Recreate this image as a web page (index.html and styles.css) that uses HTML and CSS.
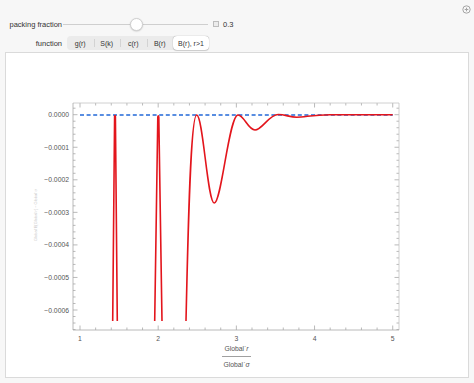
FILE: index.html
```html
<!DOCTYPE html>
<html lang="en">
<head>
    <meta charset="UTF-8">
    <meta name="viewport" content="width=device-width, initial-scale=1.0">
    <title>Bridge Function of Hard Spheres</title>
    <link rel="stylesheet" href="styles.css">
</head>
<body>
    <div class="app">
        <button class="corner-btn" title="Options">
            <svg width="9" height="9" viewBox="0 0 9 9"><circle cx="4.5" cy="4.5" r="3.7" fill="none" stroke="#a4a4a4" stroke-width="1"/><path d="M4.5 2.7v3.6M2.7 4.5h3.6" stroke="#a4a4a4" stroke-width="1"/></svg>
        </button>

        <div class="controls">
            <div class="row">
                <span class="label">packing fraction</span>
                <div class="slider">
                    <div class="track"></div>
                    <div class="thumb" style="left: 50.3%"></div>
                </div>
                <span class="plus-box"></span>
                <span class="value">0.3</span>
            </div>
            <div class="row">
                <span class="label">function</span>
                <div class="seg">
                    <button>g(r)</button>
                    <button>S(k)</button>
                    <button>c(r)</button>
                    <button>B(r)</button>
                    <button class="wide active">B(r), r&gt;1</button>
                </div>
            </div>
        </div>

        <div class="panel">
            <svg id="plot" width="462" height="324" viewBox="6 53 462 324">
                <!-- frame -->
                <g id="ticks" stroke="#a8a8a8" stroke-width="0.8"></g>
                <line x1="73" y1="103" x2="399" y2="103" stroke="#c4c4c4" stroke-width="0.8"/>
                <line x1="399" y1="103" x2="399" y2="330" stroke="#c4c4c4" stroke-width="0.8"/>
                <line x1="73" y1="103" x2="73" y2="330" stroke="#a8a8a8" stroke-width="0.8"/>
                <line x1="73" y1="330" x2="399" y2="330" stroke="#a8a8a8" stroke-width="0.8"/>
                <g id="labels" class="tick-label"></g>

                <!-- y axis label (rotated) -->
                <text class="y-title" transform="translate(37 215) rotate(-90)" text-anchor="middle">Global`B[Global`r] − Global`σ</text>

                <!-- x axis label -->
                <text class="axis-title" x="236.5" y="351" text-anchor="middle">Global`<tspan font-style="italic">r</tspan></text>
                <line x1="222" y1="356.5" x2="251" y2="356.5" stroke="#777" stroke-width="0.7"/>
                <text class="axis-title" x="236.5" y="367" text-anchor="middle">Global`<tspan font-style="italic">σ</tspan></text>

                <!-- zero reference -->
                <line x1="80" y1="115" x2="392.7" y2="115" stroke="#2268d8" stroke-width="1.5" stroke-dasharray="4 2.6"/>

                <!-- B(r) for r > 1 -->
                <g fill="none" stroke="#e3151c" stroke-width="1.6" stroke-linejoin="round" stroke-linecap="butt">
                    <path d="M112.7 321 L114.6 116.5 Q115 114.8 115.4 116.5 L117.3 321"/>
                    <path d="M154.7 321 L157.8 117 Q158.3 114.8 158.8 117 L162 321"/>
                    <path d="M186 321 C188 230 190.5 115 196.7 115 C203 115 207.5 203 214.3 203 C221.5 203 229 115 238 115 C244 115 248 130 255 130 C262 130 269 114.5 278.3 114.5 C285 114.5 290 117.2 296.7 117.2 C305 117.2 313 114.8 330 114.8 L392.7 114.8"/>
                </g>
            </svg>
        </div>
    </div>

    <script>
        const svgNS = 'http://www.w3.org/2000/svg';
        const tickGroup = document.getElementById('ticks');
        const labelGroup = document.getElementById('labels');

        // plot coordinates
        function px(r) { return 80 + (r - 1) * 78.18; }
        function py(v) { return 114.7 - v * 32.55; }

        function line(x1, y1, x2, y2) {
            const el = document.createElementNS(svgNS, 'line');
            el.setAttribute('x1', x1);
            el.setAttribute('y1', y1);
            el.setAttribute('x2', x2);
            el.setAttribute('y2', y2);
            tickGroup.appendChild(el);
        }

        function label(x, y, text, anchor) {
            const el = document.createElementNS(svgNS, 'text');
            el.setAttribute('x', x);
            el.setAttribute('y', y);
            el.setAttribute('text-anchor', anchor);
            el.textContent = text;
            labelGroup.appendChild(el);
        }

        // x ticks, every 0.2
        for (let i = 0; i <= 20; i++) {
            const r = 1 + i * 0.2;
            const x = px(r);
            const len = i % 5 === 0 ? 4.5 : 2.5;
            line(x, 330, x, 330 - len);
            line(x, 103, x, 103 + len);
            if (i % 5 === 0) label(x, 341, String(r), 'middle');
        }

        // y ticks, every 0.00002
        for (let i = -33; i <= 1; i++) {
            const v = i * 0.2;
            const y = py(v);
            const major = i % 5 === 0;
            const len = major ? 4.5 : 2.5;
            line(73, y, 73 + len, y);
            line(399, y, 399 - len, y);
            if (major) {
                const n = -i / 5;
                label(69, y + 2.5, n === 0 ? '0.0000' : '\u22120.000' + n, 'end');
            }
        }
    </script>
</body>
</html>
```

FILE: styles.css
```css
body {
    margin: 0;
    background: #f7f7f7;
    font-family: "Liberation Sans", Arial, sans-serif;
    color: #333;
}
.app {
    position: relative;
    width: 474px;
    height: 383px;
}
.corner-btn {
    position: absolute;
    top: 5px;
    right: 3px;
    padding: 0;
    border: none;
    background: none;
    line-height: 0;
}
.controls {
    padding: 17px 0 0 9px;
    display: flex;
    flex-direction: column;
    gap: 5px;
}
.row {
    display: flex;
    align-items: center;
    height: 14px;
}
.label {
    width: 53px;
    text-align: right;
    font-size: 7.5px;
    color: #333;
    white-space: nowrap;
}
.slider {
    position: relative;
    width: 145px;
    height: 14px;
    margin-left: 1px;
}
.track {
    position: absolute;
    left: 0;
    right: 0;
    top: 6.5px;
    height: 1px;
    background: #cfcfcf;
}
.thumb {
    position: absolute;
    top: 1px;
    width: 11px;
    height: 11px;
    margin-left: -6px;
    border-radius: 50%;
    background: #fff;
    border: 0.5px solid #d0d0d0;
    box-shadow: 0 0.5px 1.5px rgba(0,0,0,0.2);
}
.plus-box {
    width: 4px;
    height: 4px;
    margin-left: 5px;
    border: 1px solid #bdbdbd;
    background: #ececec;
}
.value {
    margin-left: 4px;
    font-size: 7.5px;
    color: #333;
}
.seg {
    display: flex;
    height: 14px;
    margin-left: 5px;
    background: #ebebeb;
    border-radius: 4px;
}
.seg button {
    position: relative;
    width: 26.5px;
    padding: 0;
    border: none;
    background: none;
    font-family: inherit;
    font-size: 7px;
    color: #333;
    border-radius: 4px;
}
.seg button + button::before {
    content: "";
    position: absolute;
    left: 0;
    top: 3px;
    bottom: 3px;
    width: 1px;
    background: #d3d3d3;
}
.seg button.wide { width: 36px; }
.seg button.active {
    background: #fff;
    box-shadow: 0 0 1px rgba(0,0,0,0.35), 0 0.5px 1px rgba(0,0,0,0.15);
}
.seg button.active::before { display: none; }
.panel {
    margin: 2px 5px 0 5px;
    height: 324px;
    background: #fff;
    border: 1px solid #dadada;
}
.panel svg { display: block; }
.tick-label {
    font-family: "Liberation Sans", Arial, sans-serif;
    font-size: 6.8px;
    fill: #555;
}
.axis-title {
    font-family: "Liberation Sans", Arial, sans-serif;
    font-size: 6.8px;
    fill: #555;
}
.y-title {
    font-family: "Liberation Sans", Arial, sans-serif;
    font-size: 4px;
    fill: #c4c4c4;
}
```
